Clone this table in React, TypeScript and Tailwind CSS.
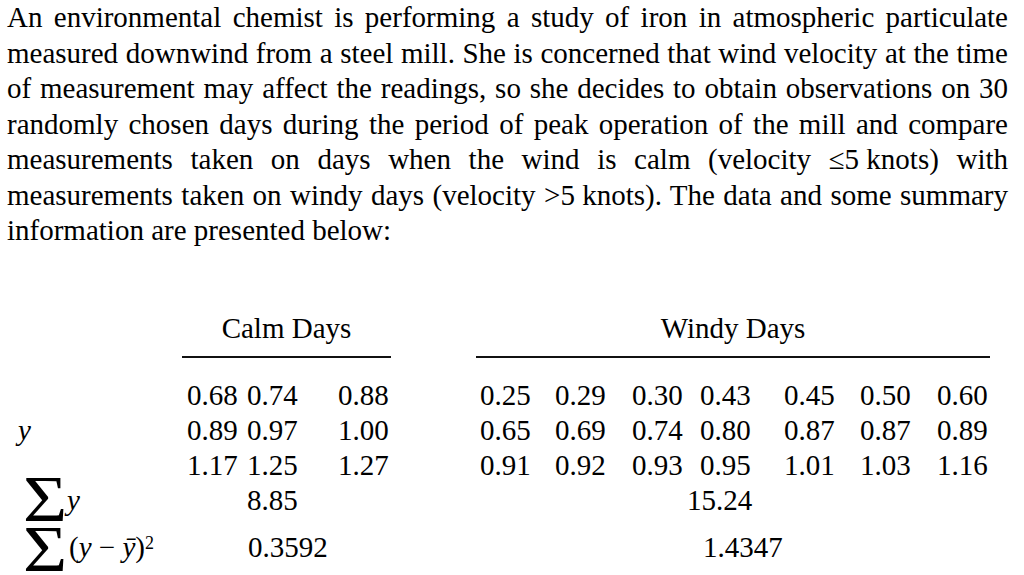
import React from "react";

const serif = { fontFamily: '"Liberation Serif", "Times New Roman", serif' };

const lines = [
  "An environmental chemist is performing a study of iron in atmospheric particulate",
  "measured downwind from a steel mill. She is concerned that wind velocity at the time",
  "of measurement may affect the readings, so she decides to obtain observations on 30",
  "randomly chosen days during the period of peak operation of the mill and compare",
];

const widths = ["w-[60px]", "w-[91px]", "w-[142px]", "w-[75px]", "w-[77px]", "w-[68px]", "w-[84px]", "w-[76px]", "w-[77px]", "w-[70px]"];

const rows = [
  ["0.68", "0.74", "0.88", "0.25", "0.29", "0.30", "0.43", "0.45", "0.50", "0.60"],
  ["0.89", "0.97", "1.00", "0.65", "0.69", "0.74", "0.80", "0.87", "0.87", "0.89"],
  ["1.17", "1.25", "1.27", "0.91", "0.92", "0.93", "0.95", "1.01", "1.03", "1.16"],
];

function Sigma({ drop, box }: { drop: string; box: string }) {
  return (
    <span className={`inline-block leading-[0] ${box} ${drop}`}>
      <span className="inline-block text-[66px] leading-[0] scale-x-[1.15] origin-left">Σ</span>
    </span>
  );
}

export default function App() {
  return (
    <div className="w-[1024px] h-[575px] overflow-hidden bg-white text-black text-[29px]" style={serif}>
      <div className="pl-[7px] w-[1008px] leading-[35.5px]">
        {lines.map((l, i) => (
          <div key={i} className="text-justify [text-align-last:justify] whitespace-nowrap">{l}</div>
        ))}
        <div className="text-justify [text-align-last:justify] whitespace-nowrap">
          measurements taken on days when the wind is calm (velocity <span className="inline-block">≤5 knots)</span> with
        </div>
        <div className="text-justify [text-align-last:justify] whitespace-nowrap">
          measurements taken on windy days (velocity <span className="inline-block">&gt;5 knots).</span> The data and some summary
        </div>
        <div>information are presented below:</div>
      </div>

      <div className="mt-[62px] flex leading-[35px]">
        <div className="ml-[182px] w-[209px] flex flex-col items-center">
          <div>Calm Days</div>
          <div className="mt-[10px] h-[2px] w-full bg-[#111]" />
        </div>
        <div className="ml-[85px] w-[514px] flex flex-col items-center">
          <div>Windy Days</div>
          <div className="mt-[10px] h-[2px] w-full bg-[#111]" />
        </div>
      </div>

      <div className="mt-[20px] pl-[7px] leading-[35px]">
        {rows.map((r, i) => (
          <div key={i} className="flex">
            <div className="w-[180px] pl-[11px] italic">{i === 1 ? "y" : ""}</div>
            {r.map((v, j) => (
              <div key={j} className={widths[j]}>{v}</div>
            ))}
          </div>
        ))}
        <div className="flex">
          <div className="w-[180px] pl-[16px] whitespace-nowrap">
            <Sigma drop="align-[-11px]" box="w-[44px]" />
            <span className="italic">y</span>
          </div>
          <div className="w-[60px]" />
          <div className="w-[91px]">8.85</div>
          <div className="w-[349px]" />
          <div>15.24</div>
        </div>
        <div className="flex mt-[12px]">
          <div className="w-[180px] pl-[16px] whitespace-nowrap">
            <Sigma drop="align-[-14px]" box="w-[46px]" />
            <span>(<span className="italic">y</span> − <span className="italic">ȳ</span>)<span className="text-[18px] leading-[0] align-[8px]">2</span></span>
          </div>
          <div className="w-[61px]" />
          <div className="w-[455px]">0.3592</div>
          <div>1.4347</div>
        </div>
      </div>
    </div>
  );
}
